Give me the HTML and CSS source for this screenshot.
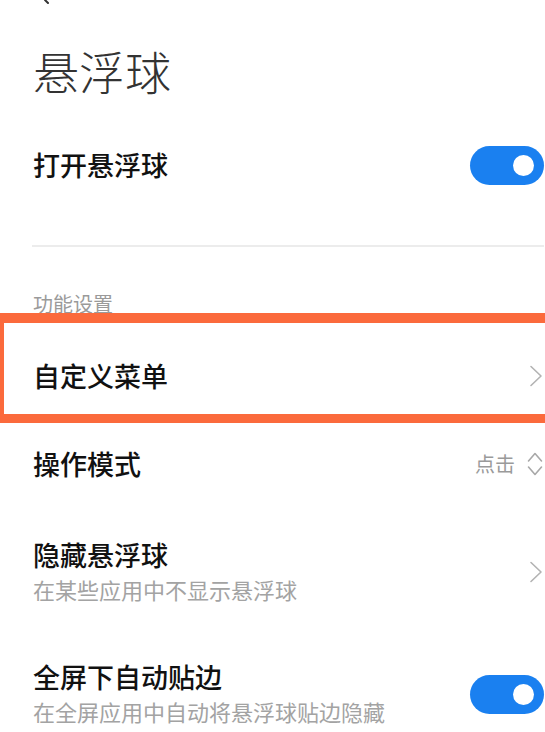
FILE: index.html
```html
<!DOCTYPE html>
<html lang="zh-CN">
<head>
<meta charset="utf-8">
<title>悬浮球</title>
<link rel="stylesheet" href="styles.css">
</head>
<body>
<div class="page">
  <svg class="back-tip" width="12" height="4" viewBox="0 0 12 4"><path d="M4 0 L7 3" fill="none" stroke="#333" stroke-width="2" stroke-linecap="round"/></svg>
  <h1 class="title">悬浮球</h1>

  <div class="row row-main">
    <div class="label">打开悬浮球</div>
    <div class="switch on"><span class="knob"></span></div>
  </div>

  <div class="divider"></div>

  <div class="section">功能设置</div>

  <div class="row row-menu">
    <div class="label">自定义菜单</div>
    <svg class="chev" width="14" height="22" viewBox="0 0 14 22"><path d="M2 1.5 L12 11 L2 20.5" fill="none" stroke="#b3b3b3" stroke-width="1.6" stroke-linejoin="round" stroke-linecap="round"/></svg>
    <div class="highlight"></div>
  </div>

  <div class="row row-mode">
    <div class="label">操作模式</div>
    <div class="value">
      <span class="value-text">点击</span>
      <svg class="updown" width="16" height="26" viewBox="0 0 16 26"><path d="M1.5 10 L8 2.5 L14.5 10 M1.5 16 L8 23.5 L14.5 16" fill="none" stroke="#a8a8a8" stroke-width="1.6" stroke-linejoin="round" stroke-linecap="round"/></svg>
    </div>
  </div>

  <div class="row row-two row-hide">
    <div class="texts">
      <div class="label">隐藏悬浮球</div>
      <div class="sub">在某些应用中不显示悬浮球</div>
    </div>
    <svg class="chev" width="14" height="22" viewBox="0 0 14 22"><path d="M2 1.5 L12 11 L2 20.5" fill="none" stroke="#b3b3b3" stroke-width="1.6" stroke-linejoin="round" stroke-linecap="round"/></svg>
  </div>

  <div class="row row-two row-edge">
    <div class="texts">
      <div class="label">全屏下自动贴边</div>
      <div class="sub">在全屏应用中自动将悬浮球贴边隐藏</div>
    </div>
    <div class="switch on"><span class="knob"></span></div>
  </div>
</div>
</body>
</html>
```

FILE: styles.css
```css
html, body {
  margin: 0;
  padding: 0;
  background: #ffffff;
}

body {
  font-family: "Noto Sans CJK SC", "Noto Sans", sans-serif;
  color: #1a1a1a;
  overflow: hidden;
}

.page {
  padding: 0 1px 0 33px;
}

.back-tip {
  display: block;
  margin: 0 0 36px 8px;
}

.title {
  margin: 0;
  font-size: 46px;
  line-height: 60px;
  font-weight: 300;
  color: #333333;
}

.row {
  display: flex;
  align-items: center;
  justify-content: space-between;
  position: relative;
}

.label {
  font-size: 27px;
  line-height: 34px;
  font-weight: 500;
  color: #111111;
}

.row-main {
  height: 80px;
  margin-top: 25px;
}

.switch {
  width: 74px;
  height: 39px;
  border-radius: 20px;
  background: #1a80f0;
  display: flex;
  align-items: center;
  justify-content: flex-end;
  padding-right: 10px;
  box-sizing: border-box;
  flex: none;
}

.knob {
  width: 21px;
  height: 21px;
  border-radius: 50%;
  background: #ffffff;
}

.divider {
  height: 2px;
  background: #ececec;
  margin: 40px 0 0 -1px;
}

.section {
  margin-top: 45px;
  font-size: 20px;
  line-height: 24px;
  color: #9a9a9a;
}

.row-menu {
  height: 88px;
  margin-top: 16px;
}

.chev {
  flex: none;
  margin-right: 1px;
}

.highlight {
  position: absolute;
  top: -19px;
  left: -39px;
  right: -20px;
  height: 110px;
  border: 10px solid #fb6a3c;
  border-bottom-width: 9px;
  box-sizing: border-box;
  pointer-events: none;
}

.row-mode {
  height: 88px;
}

.value {
  display: flex;
  align-items: center;
  gap: 12px;
}

.value-text {
  font-size: 20px;
  line-height: 24px;
  color: #9a9a9a;
}

.updown {
  flex: none;
  margin-right: 1px;
}

.row-two {
  padding: 30px 0;
}

.row-edge {
  padding-top: 24px;
}

.texts {
  display: flex;
  flex-direction: column;
}

.sub {
  font-size: 22px;
  line-height: 34px;
  color: #a3a3a3;
}
```
